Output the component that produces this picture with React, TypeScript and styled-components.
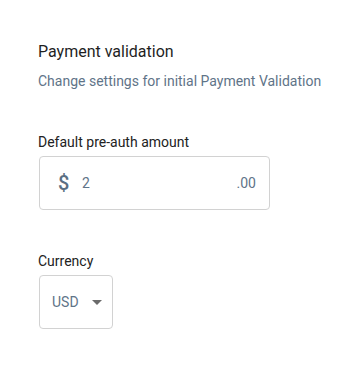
import React from "react";
import styled, { createGlobalStyle } from "styled-components";

const GlobalStyle = createGlobalStyle`
    html, body {
        margin: 0;
        padding: 0;
        background: #ffffff;
    }
    body {
        font-family: Roboto, "Liberation Sans", Arial, sans-serif;
        -webkit-font-smoothing: antialiased;
    }
`;

const Page = styled.div`
    display: flex;
    flex-direction: column;
    padding: 41px 0 0 38px;
`;

const Title = styled.div`
    font-size: 16px;
    line-height: 22px;
    color: #1f1f1f;
`;

const Subtitle = styled.div`
    margin-top: 8px;
    font-size: 14px;
    line-height: 20px;
    color: #5f7488;
`;

const Field = styled.div<{ $top: number }>`
    display: flex;
    flex-direction: column;
    margin-top: ${props => props.$top}px;
`;

const Label = styled.div`
    font-size: 14px;
    line-height: 20px;
    color: #222222;
    margin-bottom: 4px;
`;

const Box = styled.div<{ $width: number }>`
    box-sizing: border-box;
    display: flex;
    align-items: center;
    width: ${props => props.$width}px;
    height: 54px;
    margin-left: 1px;
    border: 1px solid #d2d2d2;
    border-radius: 4px;
    color: #5f7488;
`;

const Dollar = styled.span`
    font-size: 20px;
    font-weight: 500;
    margin-left: 18px;
    width: 24px;
    color: #5a6f84;
`;

const Amount = styled.span`
    flex: 1;
    font-size: 14px;
`;

const Cents = styled.span`
    font-size: 14px;
    margin-right: 13px;
`;

const SelectValue = styled.span`
    font-size: 14px;
    margin-left: 12px;
`;

const Caret = styled.span`
    width: 0;
    height: 0;
    margin-left: 13px;
    border-left: 5px solid transparent;
    border-right: 5px solid transparent;
    border-top: 5px solid #6b6b6b;
`;

export default function App() {
    return (
        <>
            <GlobalStyle />
            <Page>
                <Title>Payment validation</Title>
                <Subtitle>Change settings for initial Payment Validation</Subtitle>
                <Field $top={41}>
                    <Label>Default pre-auth amount</Label>
                    <Box $width={231}>
                        <Dollar>$</Dollar>
                        <Amount>2</Amount>
                        <Cents>.00</Cents>
                    </Box>
                </Field>
                <Field $top={41}>
                    <Label>Currency</Label>
                    <Box $width={74}>
                        <SelectValue>USD</SelectValue>
                        <Caret />
                    </Box>
                </Field>
            </Page>
        </>
    );
}
